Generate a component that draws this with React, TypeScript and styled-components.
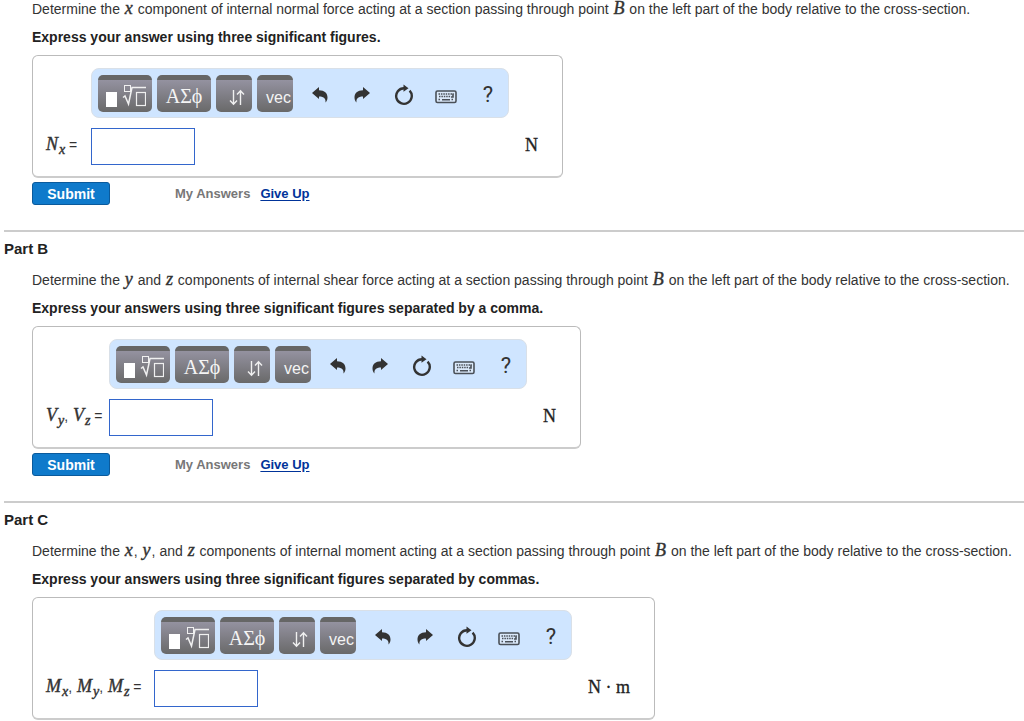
import React from "react";
import styled, { createGlobalStyle } from "styled-components";

const sans = `"Liberation Sans", Arial, sans-serif`;
const serif = `"Liberation Serif", "Times New Roman", serif`;

const GlobalStyle = createGlobalStyle`
  * { box-sizing: border-box; }
  body { margin: 0; background: #fff; color: #333; font: 14px/18px ${sans}; }
  button, input { font-family: inherit; margin: 0; }
`;

const Page = styled.main`
  display: flex;
  flex-direction: column;
  padding-left: 4px;
`;

const Part = styled.section`
  display: flex;
  flex-direction: column;
  & + & {
    margin-top: 25px;
    border-top: 2px solid #ccc;
    padding-top: 8px;
  }
`;

const Heading = styled.h2`
  margin: 0 0 13px;
  font-size: 15px;
  line-height: 18px;
  color: #222;
`;

const Body = styled.div`
  display: flex;
  flex-direction: column;
  align-items: flex-start;
  padding-left: 28px;
`;

const Question = styled.p`
  margin: 0 0 10px;
  line-height: 18px;
  white-space: nowrap;
`;

const Instruction = styled.p`
  margin: 0 0 9px;
  font-weight: 700;
  color: #222;
`;

const Var = styled.i`
  margin: 0 1px;
  font-family: ${serif};
  font-size: 18px;
  line-height: 0;
  -webkit-text-stroke: 0.4px currentColor;
`;

const AnswerBox = styled.div<{ $label: number }>`
  display: grid;
  grid-template-columns: ${(p) => p.$label}px 418px auto;
  row-gap: 10px;
  align-items: center;
  padding: 12px 24px 11px 12px;
  border: 1px solid #bbb;
  border-bottom: 2px solid #ccc;
  border-radius: 6px;
`;

const Toolbar = styled.div`
  grid-column: 2;
  display: flex;
  align-items: center;
  gap: 5px;
  height: 50px;
  padding-left: 6px;
  border: 1px solid #d9e0e8;
  border-radius: 8px;
  background: #cfe5ff;
`;

const PaletteButton = styled.button<{ $wide?: boolean }>`
  flex: none;
  display: flex;
  align-items: flex-end;
  justify-content: ${(p) => (p.$wide ? "center" : "flex-end")};
  width: ${(p) => (p.$wide ? 54 : 36)}px;
  height: 37px;
  padding: ${(p) => (p.$wide ? "0 0 4px" : "0 2px 4px 0")};
  border: 0;
  border-top: 5px solid #666;
  border-radius: 5px;
  background: linear-gradient(#9492a0, #696969);
  color: #f4f4f4;
  font-size: 16px;
  line-height: 20px;
`;

const Greek = styled.span`
  font-family: ${serif};
  font-size: 20px;
  line-height: 24px;
`;

const IconGroup = styled.div`
  display: flex;
  gap: 6px;
  margin-left: 4px;
  padding-top: 4px;
`;

const IconButton = styled.button`
  display: flex;
  align-items: center;
  justify-content: center;
  width: 36px;
  height: 36px;
  padding: 0;
  border: 0;
  background: none;
  color: #333;
  font: 22px/36px Roboto, sans-serif;
`;

const Label = styled.label`
  grid-column: 1;
  padding-bottom: 4px;
  font-size: 14px;
  line-height: 24px;
  white-space: nowrap;
`;

const Sub = styled.i`
  position: relative;
  top: 4px;
  font-family: ${serif};
  font-size: 14px;
  line-height: 0;
  -webkit-text-stroke: 0.4px currentColor;
`;

const AnswerInput = styled.input`
  width: 104px;
  height: 37px;
  padding: 0 6px;
  border: 1px solid #3366cc;
  border-radius: 0;
  background: #fff;
  font-size: 16px;
`;

const Unit = styled.span`
  padding: 0 0 4px 16px;
  font-family: ${serif};
  font-size: 18px;
  line-height: 24px;
  color: #222;
  -webkit-text-stroke: 0.3px currentColor;
`;

const Actions = styled.div`
  display: flex;
  align-items: center;
  margin-top: 4px;
`;

const Submit = styled.button`
  width: 78px;
  height: 23px;
  padding: 0;
  border: 1px solid #0a5a9c;
  border-radius: 3px;
  background: #0f7acb;
  color: #fff;
  font-size: 14px;
  font-weight: 700;
`;

const MyAnswers = styled.span`
  margin: 0 10px 0 65px;
  color: #777;
  font-size: 13px;
  font-weight: 700;
`;

const GiveUp = styled.a`
  color: #039;
  font-size: 13px;
  font-weight: 700;
  text-underline-offset: 2px;
`;

const UndoIcon = () => (
  <svg width="16" height="16" viewBox="0 0 16 16" aria-hidden="true">
    <path d="M0 6 7 0v3.2c5.5 0 8.5 3 8.5 7.2 0 2-.7 3.8-2 5.200.4-3.900-1.200-6.200-6.500-6.200V12z" fill="currentColor" />
  </svg>
);

const RedoIcon = () => (
  <svg width="16" height="16" viewBox="0 0 16 16" aria-hidden="true">
    <path d="M16 6 9 0v3.200C3.500 3.200.5 6.200.5 10.400c0 2 .7 3.800 2 5.200C2.100 11.700 3.700 9.400 9 9.400V12z" fill="currentColor" />
  </svg>
);

const ResetIcon = () => (
  <svg width="20" height="22" viewBox="0 0 20 22" aria-hidden="true">
    <path d="M11 4.200H10A7.800 7.800 0 1 0 15.600 6.600" fill="none" stroke="currentColor" strokeWidth="2.400" />
    <path d="M9.500 .4 14.500 4.200 9.500 7.800z" fill="currentColor" />
  </svg>
);

const KeyboardIcon = () => (
  <svg width="22" height="22" viewBox="0 0 22 22" aria-hidden="true">
    <rect x="1" y="7" width="20" height="11.500" rx="1.500" fill="#dbe9fa" stroke="#4a5058" strokeWidth="1.600" />
    <path d="M3.500 10h15M4 12.500h12M3.500 15.500h2M16.500 15.500h2" stroke="#4a5058" strokeWidth="1.600" strokeDasharray="1.500 .9" />
    <path d="M7 15.700h8M18 9.500v3.500h-2" fill="none" stroke="#4a5058" strokeWidth="1.600" />
  </svg>
);

const TemplateIcon = () => (
  <svg width="42" height="24" viewBox="0 0 42 24" fill="none" stroke="#f0f0f0" aria-hidden="true">
    <rect x="2" y="8" width="11" height="15" fill="#fff" stroke="none" />
    <rect x="20.500" y="1.500" width="6" height="6" />
    <path d="M19 13.500l2-1.500 3.500 8L28 3.500h14" strokeWidth="1.500" />
    <rect x="32.500" y="8.500" width="9" height="13" strokeWidth="1.200" />
  </svg>
);

const ArrowsIcon = () => (
  <svg width="22" height="20" viewBox="0 0 22 20" fill="none" stroke="#f0f0f0" strokeWidth="1.400" aria-hidden="true">
    <path d="M5.500 2v14M2 12.500l3.500 3.800 3.500-3.800M12.500 17V3M9 6.500l3.500-3.800L16 6.500" />
  </svg>
);

interface AnswerProps {
  id: string;
  label: React.ReactNode;
  labelWidth: number;
  unit: string;
}

const Answer = ({ id, label, labelWidth, unit }: AnswerProps) => (
  <AnswerBox $label={labelWidth}>
    <Toolbar role="toolbar" aria-label="Equation tools">
      <PaletteButton $wide aria-label="Templates"><TemplateIcon /></PaletteButton>
      <PaletteButton $wide aria-label="Symbols"><Greek>ΑΣϕ</Greek></PaletteButton>
      <PaletteButton aria-label="Subscript and superscript"><ArrowsIcon /></PaletteButton>
      <PaletteButton>vec</PaletteButton>
      <IconGroup>
        <IconButton aria-label="Undo"><UndoIcon /></IconButton>
        <IconButton aria-label="Redo"><RedoIcon /></IconButton>
        <IconButton aria-label="Reset"><ResetIcon /></IconButton>
        <IconButton aria-label="Keyboard shortcuts"><KeyboardIcon /></IconButton>
        <IconButton aria-label="Help">?</IconButton>
      </IconGroup>
    </Toolbar>
    <Label htmlFor={id}>{label} =</Label>
    <AnswerInput id={id} type="text" />
    <Unit>{unit}</Unit>
  </AnswerBox>
);

const AnswerActions = () => (
  <Actions>
    <Submit>Submit</Submit>
    <MyAnswers>My Answers</MyAnswers>
    <GiveUp href="#">Give Up</GiveUp>
  </Actions>
);

export default function App() {
  return (
    <>
      <GlobalStyle />
      <Page>
        <Part>
          <Body>
            <Question>
              Determine the <Var>x</Var> component of internal normal force acting at a section passing through point <Var>B</Var> on the left part of the body relative to the cross-section.
            </Question>
            <Instruction>Express your answer using three significant figures.</Instruction>
            <Answer id="part-a" labelWidth={46} unit="N" label={<><Var>N</Var><Sub>x</Sub></>} />
            <AnswerActions />
          </Body>
        </Part>
        <Part>
          <Heading>Part B</Heading>
          <Body>
            <Question>
              Determine the <Var>y</Var> and <Var>z</Var> components of internal shear force acting at a section passing through point <Var>B</Var> on the left part of the body relative to the cross-section.
            </Question>
            <Instruction>Express your answers using three significant figures separated by a comma.</Instruction>
            <Answer id="part-b" labelWidth={64} unit="N" label={<><Var>V</Var><Sub>y</Sub>, <Var>V</Var><Sub>z</Sub></>} />
            <AnswerActions />
          </Body>
        </Part>
        <Part>
          <Heading>Part C</Heading>
          <Body>
            <Question>
              Determine the <Var>x</Var>, <Var>y</Var>, and <Var>z</Var> components of internal moment acting at a section passing through point <Var>B</Var> on the left part of the body relative to the cross-section.
            </Question>
            <Instruction>Express your answers using three significant figures separated by commas.</Instruction>
            <Answer id="part-c" labelWidth={109} unit="N · m" label={<><Var>M</Var><Sub>x</Sub>, <Var>M</Var><Sub>y</Sub>, <Var>M</Var><Sub>z</Sub></>} />
          </Body>
        </Part>
      </Page>
    </>
  );
}
